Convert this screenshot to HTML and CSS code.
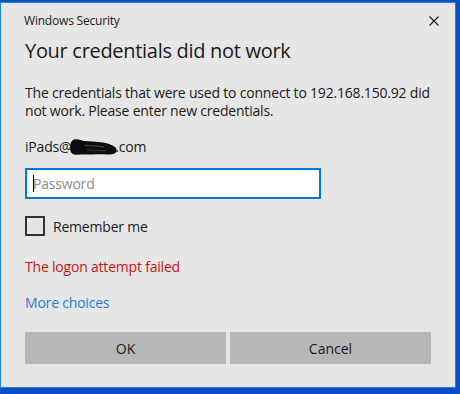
FILE: index.html
```html
<!DOCTYPE html>
<html lang="en">
<head>
    <meta charset="UTF-8">
    <meta name="viewport" content="width=device-width, initial-scale=1.0">
    <title>Windows Security</title>
    <link rel="stylesheet" href="styles.css">
</head>
<body>
    <div class="dialog">
        <div class="titlebar">
            <span class="title">Windows Security</span>
            <span class="close">
                <svg width="10" height="10" viewBox="0 0 10 10">
                    <path d="M0.5 0.5 L9.5 9.5 M9.5 0.5 L0.5 9.5" stroke="#1a1a1a" stroke-width="1.1" fill="none"/>
                </svg>
            </span>
        </div>

        <div class="content">
            <h1>Your credentials did not work</h1>

            <p class="message">The credentials that were used to connect to 192.168.150.92 did not work. Please enter new credentials.</p>

            <div class="account">iPads@<svg class="redact" width="47" height="16" viewBox="0 0 47 16">
                    <path d="M5 0.3 C9 -0.2 11 1.5 14 2 C20 2.5 27 2.5 33 3.5 C38 4.5 43 6 46 9 C47.5 12 46 15 42 15.3 C36 15.8 30 15 24 15.4 C18 15.8 12 15.4 7 15.8 C3 16 0.2 14 0.1 9.5 C0 4.5 1.5 0.8 5 0.3 Z" fill="#0d0d0d"/>
                    <path d="M15 6.5 C21 7 27 6.5 34 8" stroke="#5a5a5a" stroke-width="0.8" fill="none"/>
                    <path d="M17 11 C23 11.5 29 11 36 12" stroke="#4a4a4a" stroke-width="0.7" fill="none"/>
                </svg>.com</div>

            <div class="password-box">
                <span class="caret"></span>
                <input type="password" id="password" placeholder="Password">
            </div>

            <label class="remember">
                <span class="checkbox"></span>
                <span>Remember me</span>
            </label>

            <div class="error">The logon attempt failed</div>

            <a class="more" href="#">More choices</a>

            <div class="buttons">
                <button class="btn">OK</button>
                <button class="btn">Cancel</button>
            </div>
        </div>
    </div>
</body>
</html>
```

FILE: styles.css
```css
body {
    margin: 0;
    background-color: #0b4cc2;
    font-family: 'Open Sans', 'Noto Sans', sans-serif;
    color: #1a1a1a;
}

.dialog {
    box-sizing: border-box;
    width: 456px;
    height: 386px;
    margin-top: 2px;
    background-color: #e6e6e6;
    border: 1px solid #1a85dc;
}

.titlebar {
    display: flex;
    align-items: center;
    justify-content: space-between;
    height: 34px;
    padding: 0 16px 0 23px;
}

.title {
    font-size: 12px;
    letter-spacing: -0.2px;
}

.close {
    display: flex;
    margin-top: 1px;
}

.content {
    padding: 0 24px;
}

h1 {
    margin: 0;
    font-size: 20px;
    font-weight: 400;
    line-height: 28px;
    letter-spacing: -0.3px;
}

.message {
    margin: 19px 0 0;
    font-size: 14px;
    line-height: 18px;
    letter-spacing: -0.2px;
}

.account {
    display: flex;
    align-items: center;
    margin-top: 18px;
    font-size: 14px;
    line-height: 18px;
    letter-spacing: -0.2px;
}

.redact {
    margin: 0 -2px 0 -1px;
}

.password-box {
    position: relative;
    box-sizing: border-box;
    width: 296px;
    height: 31px;
    margin-top: 12px;
    border: 2px solid #0078d7;
    background-color: #ffffff;
}

.password-box input {
    box-sizing: border-box;
    width: 100%;
    height: 100%;
    border: none;
    outline: none;
    padding: 0 0 0 6px;
    background: transparent;
    font-family: 'Open Sans', 'Noto Sans', sans-serif;
    font-size: 14px;
    letter-spacing: -0.2px;
}

.password-box input::placeholder {
    color: #8c8c8c;
}

.caret {
    position: absolute;
    left: 6px;
    top: 5px;
    width: 1px;
    height: 17px;
    background-color: #000;
}

.remember {
    display: flex;
    align-items: center;
    gap: 8px;
    margin-top: 17px;
    font-size: 14px;
    letter-spacing: -0.2px;
}

.checkbox {
    box-sizing: border-box;
    width: 20px;
    height: 20px;
    border: 2px solid #333333;
}

.error {
    margin-top: 22px;
    font-size: 14px;
    line-height: 18px;
    letter-spacing: -0.2px;
    color: #c81414;
}

.more {
    display: block;
    margin-top: 18px;
    font-size: 14px;
    line-height: 18px;
    letter-spacing: -0.2px;
    color: #1a80d8;
    text-decoration: none;
}

.buttons {
    display: flex;
    gap: 4px;
    margin-top: 20px;
}

.btn {
    flex: 1;
    height: 32px;
    border: none;
    background-color: #b7b7b7;
    font-family: 'Open Sans', 'Noto Sans', sans-serif;
    font-size: 14px;
    color: #1a1a1a;
}
```
